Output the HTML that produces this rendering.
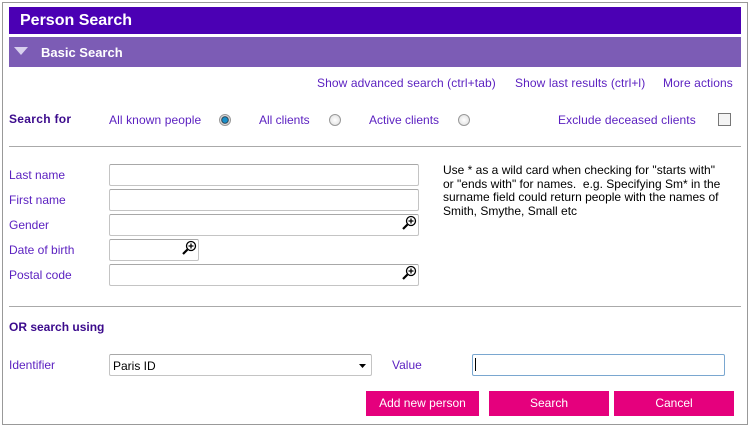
<!DOCTYPE html>
<html><head><style>
body{margin:0;width:752px;height:431px;background:#fff;font-family:"Liberation Sans",sans-serif;font-size:12px;position:relative;overflow:hidden}
.a{position:absolute;white-space:nowrap}
.frame{position:absolute;left:2px;top:2px;width:744px;height:421px;border:1px solid #999}
.lbl{color:#5a1fc0}
.in{position:absolute;border:1px solid #c4c4c4;border-top-color:#a8a8a8;background:#fff;height:20px;border-radius:2px}
.radio{position:absolute;width:10px;height:10px;border-radius:50%;border:1px solid #999;background:radial-gradient(#fff,#ddd)}
.btn{position:absolute;top:391px;height:25px;background:#e5007d;color:#fff;text-align:center;line-height:25px;font-size:12px}
.hr{position:absolute;left:9px;width:732px;height:1px;background:#aaa}
.mag{position:absolute;width:16px;height:16px}
</style></head><body>
<div class="frame"></div>
<div class="a" style="left:9px;top:7px;width:732px;height:27px;background:#4b00b4"></div>
<div class="a" style="left:20px;top:12px;color:#fff;font-weight:bold;font-size:16px">Person Search</div>
<div class="a" style="left:9px;top:37px;width:732px;height:30px;background:#7c5cb5"></div>
<svg class="a" style="left:14px;top:47px" width="14" height="9"><polygon points="0,0 14,0 7,8" fill="#d8d0ee"/></svg>
<div class="a" style="left:41px;top:45px;color:#fff;font-weight:bold;font-size:13px">Basic Search</div>
<div class="a lbl" style="left:317px;top:76px;letter-spacing:0.1px">Show advanced search (ctrl+tab)</div>
<div class="a lbl" style="left:515px;top:76px;letter-spacing:0.1px">Show last results (ctrl+l)</div>
<div class="a lbl" style="left:663px;top:76px;letter-spacing:0.1px">More actions</div>
<div class="a" style="left:9px;top:112px;color:#3b0a8c;font-weight:bold;font-size:12px;letter-spacing:0.3px">Search for</div>
<div class="a lbl" style="left:109px;top:113px;letter-spacing:0.1px">All known people</div>
<div class="radio" style="left:219px;top:114px;background:radial-gradient(#1a8fc8 35%,#234 45%,#ddd 60%)"></div>
<div class="a lbl" style="left:259px;top:113px">All clients</div>
<div class="radio" style="left:329px;top:114px"></div>
<div class="a lbl" style="left:369px;top:113px">Active clients</div>
<div class="radio" style="left:458px;top:114px"></div>
<div class="a lbl" style="left:558px;top:113px;letter-spacing:0.1px">Exclude deceased clients</div>
<div class="a" style="left:718px;top:113px;width:11px;height:11px;border:1px solid #777;background:#f4f4f4"></div>
<div class="hr" style="top:146px"></div>
<div class="a lbl" style="left:9px;top:168px">Last name</div>
<div class="a lbl" style="left:9px;top:193px">First name</div>
<div class="a lbl" style="left:9px;top:218px">Gender</div>
<div class="a lbl" style="left:9px;top:243px">Date of birth</div>
<div class="a lbl" style="left:9px;top:268px">Postal code</div>
<div class="in" style="left:109px;top:164px;width:308px"></div>
<div class="in" style="left:109px;top:189px;width:308px"></div>
<div class="in" style="left:109px;top:214px;width:308px"></div>
<div class="in" style="left:109px;top:239px;width:88px"></div>
<div class="in" style="left:109px;top:264px;width:308px"></div>
<svg class="mag" style="left:401px;top:215px" viewBox="0 0 16 16"><circle cx="10" cy="6" r="4.5" fill="#fff" stroke="#000" stroke-width="1.3"/><path d="M10 3.5v5M7.5 6h5" stroke="#000" stroke-width="1.3"/><path d="M6.5 9.5 2 14" stroke="#000" stroke-width="2.2"/></svg>
<svg class="mag" style="left:181px;top:240px" viewBox="0 0 16 16"><circle cx="10" cy="6" r="4.5" fill="#fff" stroke="#000" stroke-width="1.3"/><path d="M10 3.5v5M7.5 6h5" stroke="#000" stroke-width="1.3"/><path d="M6.5 9.5 2 14" stroke="#000" stroke-width="2.2"/></svg>
<svg class="mag" style="left:401px;top:265px" viewBox="0 0 16 16"><circle cx="10" cy="6" r="4.5" fill="#fff" stroke="#000" stroke-width="1.3"/><path d="M10 3.5v5M7.5 6h5" stroke="#000" stroke-width="1.3"/><path d="M6.5 9.5 2 14" stroke="#000" stroke-width="2.2"/></svg>
<div class="a" style="left:443px;top:164px;font-size:12px;line-height:13.5px;color:#000;white-space:normal;width:285px">Use * as a wild card when checking for "starts with" or "ends with" for names.&nbsp; e.g. Specifying Sm* in the surname field could return people with the names of Smith, Smythe, Small etc</div>
<div class="hr" style="top:306px"></div>
<div class="a" style="left:9px;top:320px;color:#3b0a8c;font-weight:bold">OR search using</div>
<div class="a lbl" style="left:9px;top:358px">Identifier</div>
<div class="in" style="left:109px;top:354px;width:261px"></div>
<div class="a" style="left:113px;top:359px;color:#000">Paris ID</div>
<svg class="a" style="left:359px;top:364px" width="8" height="5"><polygon points="0,0 7,0 3.5,4" fill="#000"/></svg>
<div class="a lbl" style="left:392px;top:358px">Value</div>
<div class="in" style="left:472px;top:354px;width:251px;border-color:#7aa7d0"></div>
<div class="a" style="left:475px;top:358px;width:1px;height:13px;background:#000"></div>
<div class="btn" style="left:366px;width:113px">Add new person</div>
<div class="btn" style="left:489px;width:120px">Search</div>
<div class="btn" style="left:614px;width:120px">Cancel</div>
</body></html>
